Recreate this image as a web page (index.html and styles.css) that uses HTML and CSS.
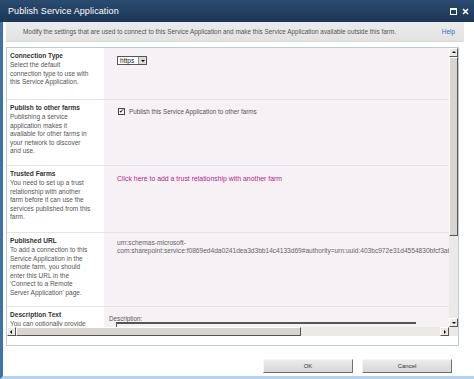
FILE: index.html
```html
<!DOCTYPE html>
<html lang="en">
<head>
    <meta charset="UTF-8">
    <title>Publish Service Application</title>
    <link rel="stylesheet" href="styles.css">
</head>
<body>
    <div class="window">
        <div class="titlebar">
            <span class="title">Publish Service Application</span>
            <span class="controls">
                <svg width="7" height="7" viewBox="0 0 7 7"><rect x="0.5" y="0.5" width="6" height="6" fill="none" stroke="#fff"/><rect x="0" y="0" width="7" height="2" fill="#fff"/></svg>
                <svg width="7" height="7" viewBox="0 0 7 7"><path d="M1 1 L6 6 M6 1 L1 6" stroke="#fff" stroke-width="1.6"/></svg>
            </span>
        </div>

        <div class="intro">
            <span>Modify the settings that are used to connect to this Service Application and make this Service Application available outside this farm.</span>
            <a class="help" href="#">Help</a>
        </div>

        <div class="frame">
            <div class="scroller">
                <div class="viewport">
                    <div class="section">
                        <div class="label">
                            <h3>Connection Type</h3>
                            <p>Select the default connection type to use with this Service Application.</p>
                        </div>
                        <div class="field">
                            <span class="select">https<span class="drop"></span></span>
                        </div>
                    </div>

                    <div class="section">
                        <div class="label">
                            <h3>Publish to other farms</h3>
                            <p>Publishing a service application makes it available for other farms in your network to discover and use.</p>
                        </div>
                        <div class="field">
                            <span class="check-row"><span class="checkbox">&#10004;</span>Publish this Service Application to other farms</span>
                        </div>
                    </div>

                    <div class="section">
                        <div class="label">
                            <h3>Trusted Farms</h3>
                            <p>You need to set up a trust relationship with another farm before it can use the services published from this farm.</p>
                        </div>
                        <div class="field">
                            <a class="trust-link" href="#">Click here to add a trust relationship with another farm</a>
                        </div>
                    </div>

                    <div class="section">
                        <div class="label">
                            <h3>Published URL</h3>
                            <p>To add a connection to this Service Application in the remote farm, you should enter this URL in the 'Connect to a Remote Server Application' page.</p>
                        </div>
                        <div class="field url">
                            urn:schemas-microsoft-<br>com:sharepoint:service:f0869ed4da0241dea3d3bb14c4133d69#authority=urn:uuid:403bc972e31d4554830bfcf3a6e2a7b1
                        </div>
                    </div>

                    <div class="section">
                        <div class="label">
                            <h3>Description Text</h3>
                            <p class="cut">You can optionally provide</p>
                        </div>
                        <div class="field desc">
                            <span>Description:</span>
                            <div class="textarea"></div>
                        </div>
                    </div>
                </div>

                <div class="vscroll">
                    <span class="arrow up"></span>
                    <span class="thumb"></span>
                    <span class="track"></span>
                    <span class="arrow down"></span>
                </div>
                <div class="hscroll">
                    <span class="arrow left"></span>
                    <span class="thumb"></span>
                    <span class="track"></span>
                    <span class="arrow right"></span>
                </div>
                <div class="corner"></div>
            </div>
        </div>

        <div class="buttons">
            <button class="btn">OK</button>
            <button class="btn">Cancel</button>
        </div>
    </div>
</body>
</html>
```

FILE: styles.css
```css
* {
    margin: 0;
    padding: 0;
    box-sizing: border-box;
}

body {
    font-family: 'Liberation Sans', Arial, sans-serif;
    background: #fff;
    width: 474px;
    height: 379px;
    overflow: hidden;
}

.window {
    height: 379px;
    border-left: 3px solid #3f72a8;
    border-bottom: 3px solid #b3d2ee;
    display: flex;
    flex-direction: column;
}

.titlebar {
    height: 22px;
    margin-left: -3px;
    background: linear-gradient(#2a4c70, #1c3655);
    color: #fff;
    display: flex;
    align-items: center;
    justify-content: space-between;
    padding: 0 5px 0 8px;
}

.title {
    font-size: 9px;
    letter-spacing: 0.1px;
}

.controls {
    display: flex;
    gap: 5px;
}

.intro {
    height: 20px;
    margin: 0 10px 0 3px;
    background: linear-gradient(#ececec, #e2e2e2);
    border-bottom: 1px solid #d8d8d8;
    display: flex;
    align-items: center;
    justify-content: space-between;
    padding: 0 9px 0 17px;
    font-size: 6.4px;
    color: #555;
}

.help {
    color: #3a6eb3;
    text-decoration: none;
}

.frame {
    margin: 5px 15px 0 3px;
    height: 299px;
    border: 1px solid #bccbdc;
    padding-bottom: 9px;
}

.scroller {
    height: 100%;
    display: grid;
    grid-template-columns: 1fr 9px;
    grid-template-rows: 1fr 9px;
}

.viewport {
    overflow: hidden;
}

.section {
    display: grid;
    grid-template-columns: 97px 1fr;
    border-bottom: 1px solid #e6e3e6;
}

.label {
    background: #fff;
    padding: 3px 12px 0 3px;
}

.section:nth-child(1) { height: 52px; }
.section:nth-child(2) { height: 66px; }
.section:nth-child(3) { height: 67px; }
.section:nth-child(4) { height: 74px; }
.section:nth-child(5) { height: 30px; border-bottom: none; }

.label h3 {
    font-size: 6.6px;
    font-weight: bold;
    color: #333;
    line-height: 9px;
    margin-bottom: 1px;
}

.label p {
    font-size: 6.5px;
    line-height: 8.6px;
    color: #555;
}

.label .cut {
    height: 6px;
    overflow: hidden;
}

.field {
    background: #f5f1f5;
    padding: 8px 0 0 13px;
    font-size: 6.3px;
    color: #555;
}

.select {
    display: inline-flex;
    align-items: center;
    gap: 4px;
    height: 9px;
    padding-left: 2px;
    border: 1px solid #555;
    background: #fff;
    color: #222;
    font-size: 6.6px;
}

.drop {
    width: 8px;
    height: 7px;
    background: #dcdcdc;
    border-left: 1px solid #999;
    position: relative;
}

.drop::after {
    content: "";
    position: absolute;
    left: 2px;
    top: 3px;
    border: 2px solid transparent;
    border-top: 2px solid #000;
}

.check-row {
    display: flex;
    align-items: center;
    gap: 4px;
    margin-left: 1px;
}

.checkbox {
    width: 7px;
    height: 7px;
    border: 1px solid #444;
    background: #fff;
    font-size: 6px;
    line-height: 5px;
    color: #111;
    text-align: center;
    overflow: hidden;
}

.trust-link {
    display: block;
    padding-top: 1px;
    font-size: 6.9px;
    color: #bb1a8c;
    text-decoration: none;
}

.url {
    padding-top: 6px;
    line-height: 8px;
    font-size: 6.6px;
    color: #666;
    white-space: nowrap;
    overflow: hidden;
}

.desc {
    padding: 8px 0 0 5px;
    color: #555;
    overflow: hidden;
}

.desc .textarea {
    margin: 0 0 0 7px;
    width: 300px;
    height: 8px;
    border-top: 2px solid #555;
    border-left: 1px solid #555;
}

.vscroll,
.hscroll {
    background: #eceae6;
    display: flex;
}

.vscroll {
    flex-direction: column;
}

.arrow {
    width: 9px;
    height: 9px;
    flex: none;
    background: #ece9e4;
    border: 1px solid;
    border-color: #fff #555 #555 #fff;
    position: relative;
}

.arrow::after {
    content: "";
    position: absolute;
    left: 2px;
    top: 2px;
    border: 2px solid transparent;
}

.arrow.up::after { top: 0; border-bottom-color: #000; }
.arrow.down::after { top: 3px; border-top-color: #000; }
.arrow.left::after { left: 0; border-right-color: #000; }
.arrow.right::after { left: 3px; border-left-color: #000; }

.vscroll .thumb {
    height: 179px;
    background: #d8d5d0;
    border: 1px solid;
    border-color: #fff #555 #555 #fff;
}

.hscroll .thumb {
    width: 285px;
    background: #d8d5d0;
    border: 1px solid;
    border-color: #fff #555 #555 #fff;
}

.track {
    flex: 1;
}

.corner {
    background: #eceae6;
}

.buttons {
    display: flex;
    justify-content: flex-end;
    gap: 9px;
    padding: 13px 22px 0 0;
}

.btn {
    width: 90px;
    height: 14px;
    font-family: 'Liberation Sans', Arial, sans-serif;
    font-size: 6px;
    color: #333;
    background: linear-gradient(#ececec, #d6d6d6);
    border: 1px solid;
    border-color: #f6f6f6 #707070 #707070 #f6f6f6;
}
```
